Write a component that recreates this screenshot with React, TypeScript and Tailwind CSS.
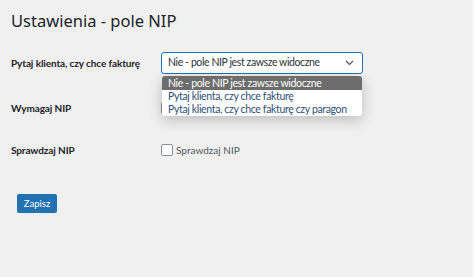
import React from 'react';

const options = [
  'Nie - pole NIP jest zawsze widoczne',
  'Pytaj klienta, czy chce fakturę',
  'Pytaj klienta, czy chce fakturę czy paragon',
];

function Checkbox() {
  return <span className="inline-block shrink-0 w-[12px] h-[12px] rounded-[2px] border border-[#8c8f94] bg-white" />;
}

export default function App() {
  return (
    <div
      className="w-[474px] h-[277px] bg-[#f0f0f1] text-[#1d2327] overflow-hidden border-r-2 border-[#f7f7f7] whitespace-nowrap"
      style={{ fontFamily: 'Lato, "Noto Sans", sans-serif' }}
    >
      {/* nagłówek */}
      <h1
        className="pl-[11px] pt-[9px] text-[16.5px] leading-[24px] font-normal"
        style={{ fontFamily: '"Noto Sans", sans-serif' }}
      >
        Ustawienia - pole NIP
      </h1>

      {/* formularz */}
      <div className="mt-[19px] pl-[11px] flex flex-col">
        <div className="flex items-center h-[22px]">
          <div className="w-[150px] text-[10px] font-bold tracking-[-0.1px]">Pytaj klienta, czy chce fakturę</div>
          <div className="relative">
            <div className="w-[202px] h-[22px] border border-[#2271b1] rounded-[3px] bg-white flex items-center justify-between pl-[6px] pr-[8px] text-[10.5px] tracking-[-0.4px] text-[#2c3338]">
              <span>{options[0]}</span>
              <svg width="9" height="6" viewBox="0 0 9 6" fill="none" stroke="#50575e" strokeWidth="1.2">
                <path d="M1 1l3.5 3.5L8 1" />
              </svg>
            </div>
            {/* rozwinięta lista */}
            <div className="absolute left-[1px] top-[24px] w-[200px] bg-white rounded-[3px] shadow-[0_4px_14px_rgba(0,0,0,0.22)] overflow-hidden z-10 text-[10.5px] tracking-[-0.35px]">
              {options.map((o, i) => (
                <div
                  key={o}
                  className={
                    i === 0
                      ? 'h-[14px] leading-[14px] pl-[6px] bg-[#6d6d6d] text-white'
                      : 'h-[13px] leading-[13px] pl-[6px] text-[#2d4f78]'
                  }
                >
                  {o}
                </div>
              ))}
            </div>
          </div>
        </div>

        <div className="flex items-center h-[22px] mt-[23px]">
          <div className="w-[150px] text-[10px] font-bold tracking-[-0.1px]">Wymagaj NIP</div>
          <Checkbox />
        </div>

        <div className="flex items-center h-[22px] mt-[20px]">
          <div className="w-[150px] text-[10px] font-bold tracking-[-0.1px]">Sprawdzaj NIP</div>
          <label className="flex items-center gap-[3px] text-[10px] text-[#50575e]">
            <Checkbox />
            Sprawdzaj NIP
          </label>
        </div>
      </div>

      <div className="pl-[17px] mt-[28px]">
        <button className="h-[19px] w-[40px] bg-[#2271b1] text-white text-[9.5px] rounded-[2px] leading-[19px]">Zapisz</button>
      </div>
    </div>
  );
}
